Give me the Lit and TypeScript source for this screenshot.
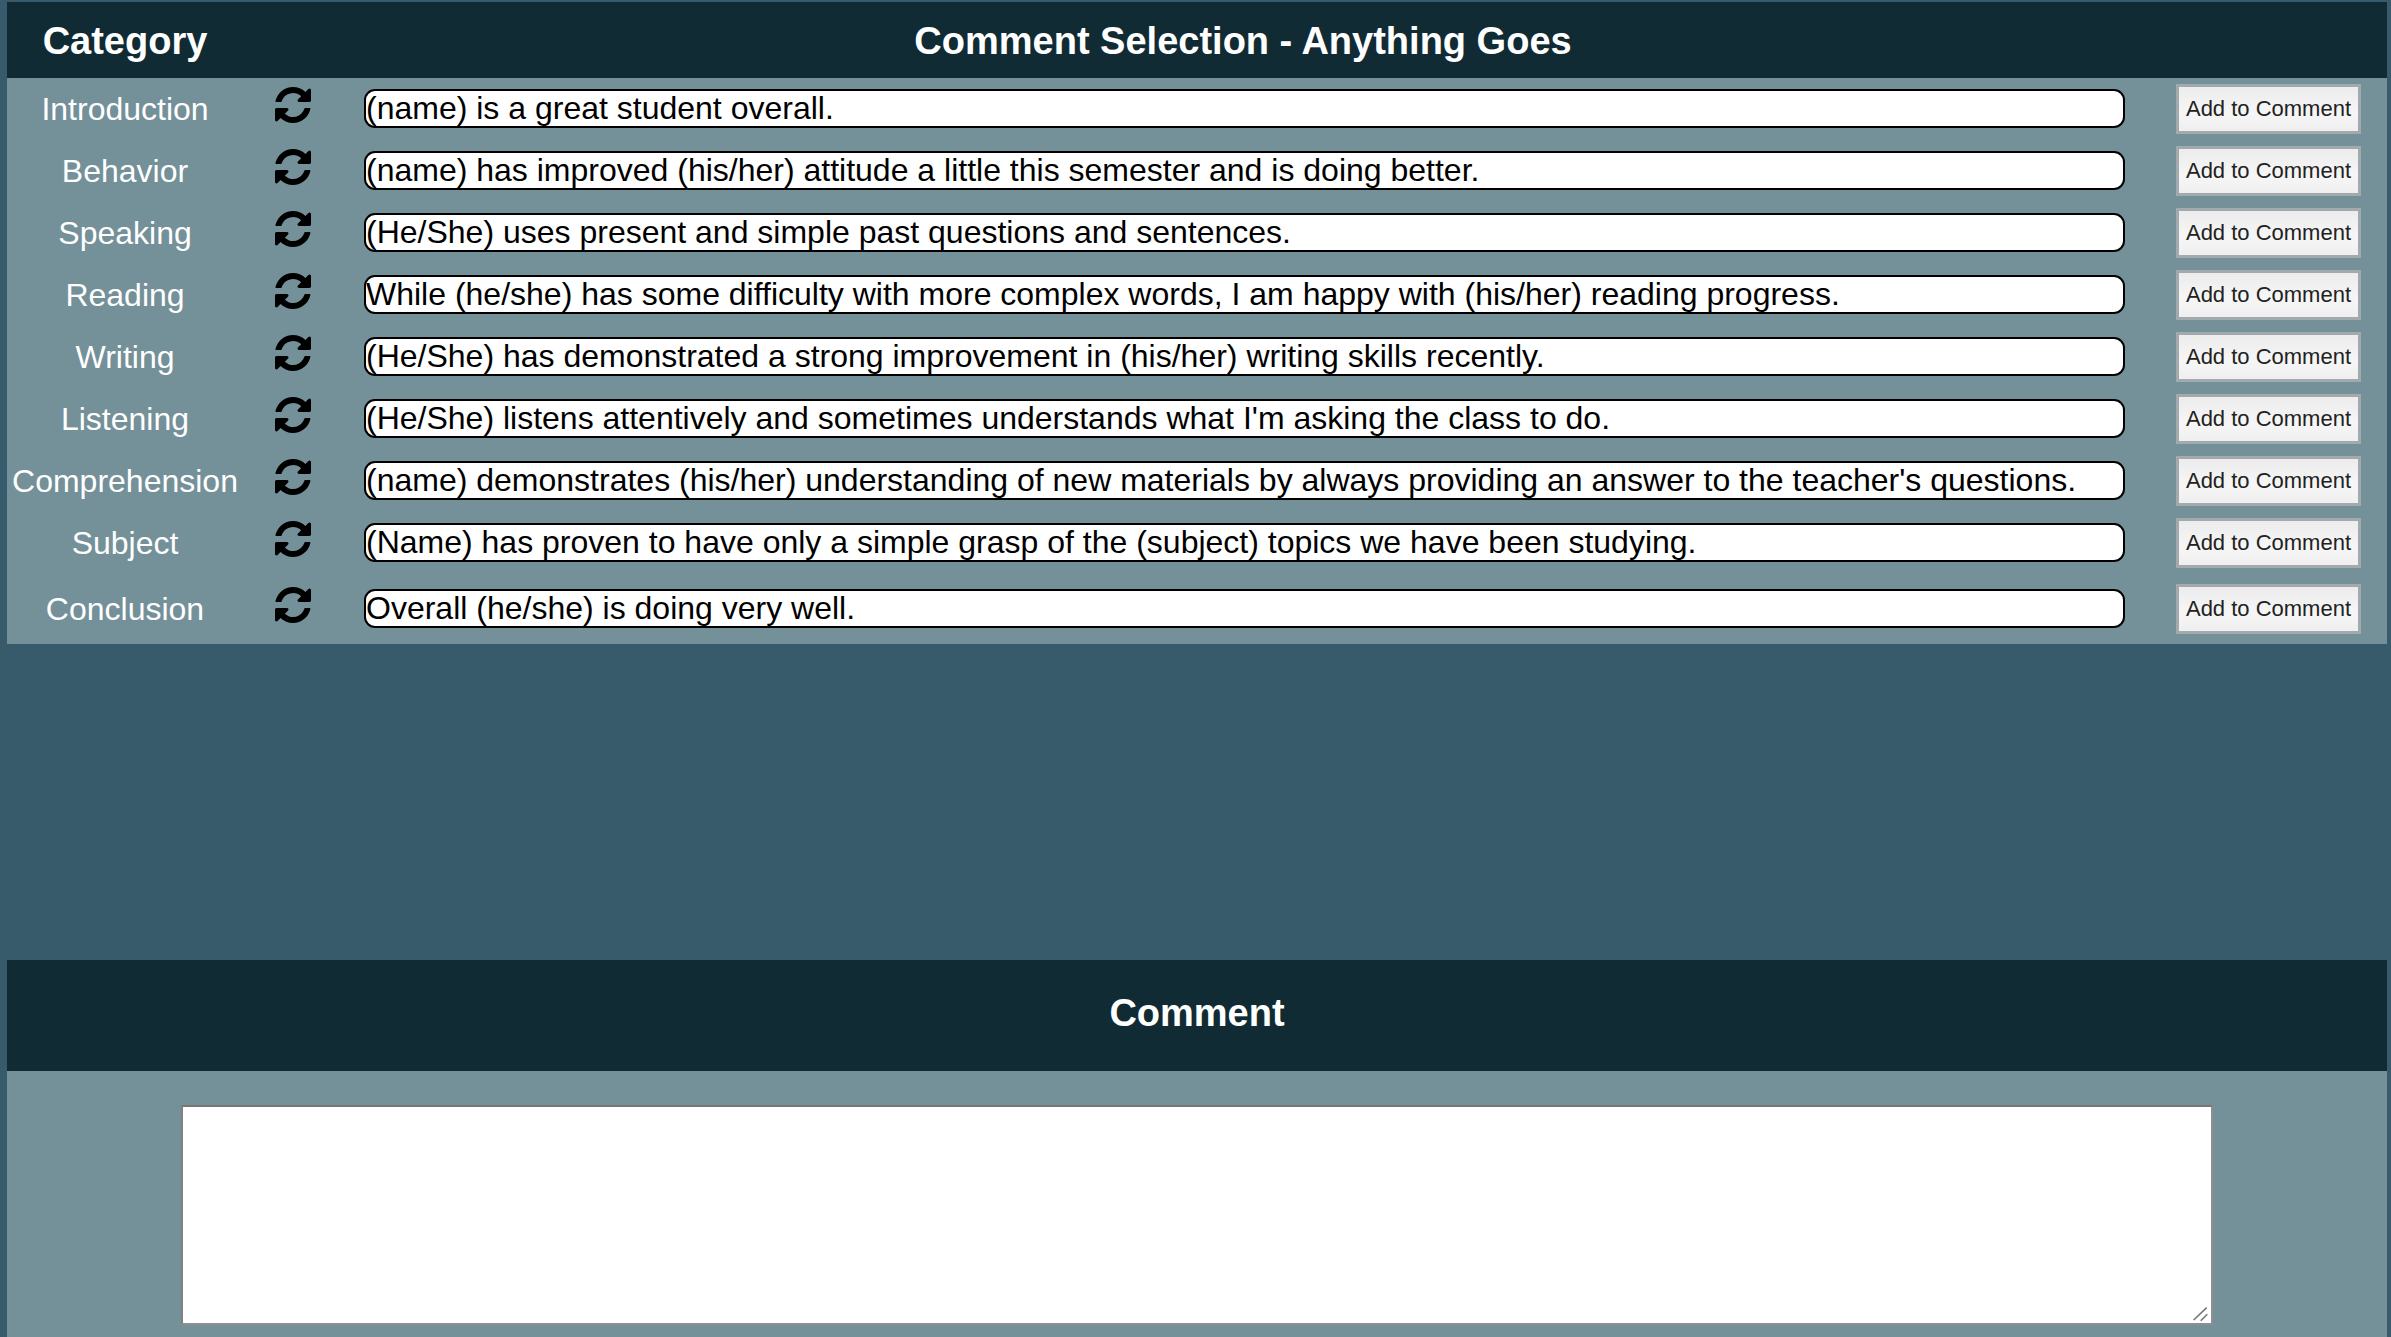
import { LitElement, html, css, svg } from "lit";
import { customElement } from "lit/decorators.js";

const ROWS: [string, string][] = [
  ["Introduction", "(name) is a great student overall."],
  ["Behavior", "(name) has improved (his/her) attitude a little this semester and is doing better."],
  ["Speaking", "(He/She) uses present and simple past questions and sentences."],
  ["Reading", "While (he/she) has some difficulty with more complex words, I am happy with (his/her) reading progress."],
  ["Writing", "(He/She) has demonstrated a strong improvement in (his/her) writing skills recently."],
  ["Listening", "(He/She) listens attentively and sometimes understands what I'm asking the class to do."],
  ["Comprehension", "(name) demonstrates (his/her) understanding of new materials by always providing an answer to the teacher's questions."],
  ["Subject", "(Name) has proven to have only a simple grasp of the (subject) topics we have been studying."],
  ["Conclusion", "Overall (he/she) is doing very well."],
];

const REFRESH = svg`<path d="M1639 1056q0 5-1 7-64 268-268 434.5t-478 166.5q-146 0-282.5-55t-243.5-157l-129 129q-19 19-45 19t-45-19-19-45v-448q0-26 19-45t45-19h448q26 0 45 19t19 45-19 45l-137 137q71 66 161 102t187 36q134 0 250-65t186-179q11-17 53-117 8-23 30-23h192q13 0 22.5 9.5t9.5 22.5zm25-800v448q0 26-19 45t-45 19h-448q-26 0-45-19t-19-45 19-45l138-138q-148-137-349-137-134 0-250 65t-186 179q-11 17-53 117-8 23-30 23h-199q-13 0-22.5-9.5t-9.5-22.5v-7q65-268 270-434.5t480-166.5q146 0 284 55.5t245 156.5l130-129q19-19 45-19t45 19 19 45z"/>`;

@customElement("app-root")
export class AppRoot extends LitElement {
  static styles = css`
    :host {
      display: block;
      height: 100vh;
      overflow: hidden;
      box-sizing: border-box;
      padding: 2px 4px 0 7px;
      background: #385b6b;
      font-family: "Liberation Sans", Arial, sans-serif;
      color: #fff;
    }
    .head {
      display: grid;
      grid-template-columns: 236px 1fr 144px;
      align-items: center;
      height: 76px;
      padding-top: 2px;
      box-sizing: border-box;
      background: #112b34;
      font-size: 38px;
      font-weight: 700;
    }
    .head div { text-align: center; }
    .rows {
      display: grid;
      grid-template-columns: 236px 121px 1761px 51px 185px 26px;
      grid-template-rows: repeat(8, 62px) 70px;
      background: #749098;
    }
    .row { display: contents; }
    .cell {
      display: flex;
      align-items: center;
      box-sizing: border-box;
    }
    .cat {
      grid-column: 1;
      justify-content: center;
      font-size: 32px;
      line-height: 1;
    }
    .ico { grid-column: 2; justify-content: center; padding: 0 21px 9px 0; }
    .ico svg { width: 42px; height: 42px; fill: #000; display: block; }
    .txt { grid-column: 3; padding-bottom: 1px; }
    .txt input {
      width: 100%;
      height: 39px;
      box-sizing: border-box;
      border: 2.5px solid #000;
      border-radius: 11px;
      padding: 0 0 1px;
      background: #fff;
      color: #000;
      font: 32px "Liberation Sans", Arial, sans-serif;
      outline: none;
    }
    .add { grid-column: 5; }
    .add button {
      width: 185px;
      height: 50px;
      padding: 0;
      box-sizing: border-box;
      border: 3px solid #a3aaad;
      border-radius: 0;
      background: linear-gradient(#ececec, #f6f6f6 60%, #efefef);
      color: #222;
      font: 22px "Liberation Sans", Arial, sans-serif;
    }
    .comment-head {
      margin-top: 316px;
      height: 111px;
      padding-bottom: 4px;
      box-sizing: border-box;
      display: flex;
      align-items: center;
      justify-content: center;
      background: #112b34;
      font-size: 38px;
      font-weight: 700;
    }
    .comment-body {
      display: flex;
      justify-content: center;
      height: 266px;
      padding-top: 34px;
      box-sizing: border-box;
      background: #749098;
    }
    .area {
      position: relative;
      width: 2032px;
      height: 220px;
    }
    textarea {
      display: block;
      width: 100%;
      height: 100%;
      box-sizing: border-box;
      border: 2px solid #8d8e92;
      border-top-color: #767676;
      border-left-color: #7f8084;
      background: #fff;
      outline: none;
      resize: none;
    }
    .grip {
      position: absolute;
      right: 4px;
      bottom: 3px;
      width: 20px;
      height: 20px;
      stroke: #757575;
      stroke-width: 1.6;
      fill: none;
      pointer-events: none;
    }
  `;

  render() {
    return html`
      <div class="head">
        <div>Category</div>
        <div>Comment Selection - Anything Goes</div>
        <div></div>
      </div>
      <div class="rows">
        ${ROWS.map(
          ([cat, text]) => html`
            <div class="row">
              <div class="cell cat">${cat}</div>
              <div class="cell ico">
                <svg viewBox="0 0 1792 1792">${REFRESH}</svg>
              </div>
              <div class="cell txt"><input type="text" .value=${text} /></div>
              <div class="cell add"><button>Add to Comment</button></div>
            </div>
          `
        )}
      </div>
      <div class="comment-head">Comment</div>
      <div class="comment-body">
        <div class="area">
          <textarea></textarea>
          <svg class="grip" viewBox="0 0 20 20">
            <path d="M4.7 18L17.7 5.7M11.7 18.7L18.3 12.3" />
          </svg>
        </div>
      </div>
    `;
  }
}
